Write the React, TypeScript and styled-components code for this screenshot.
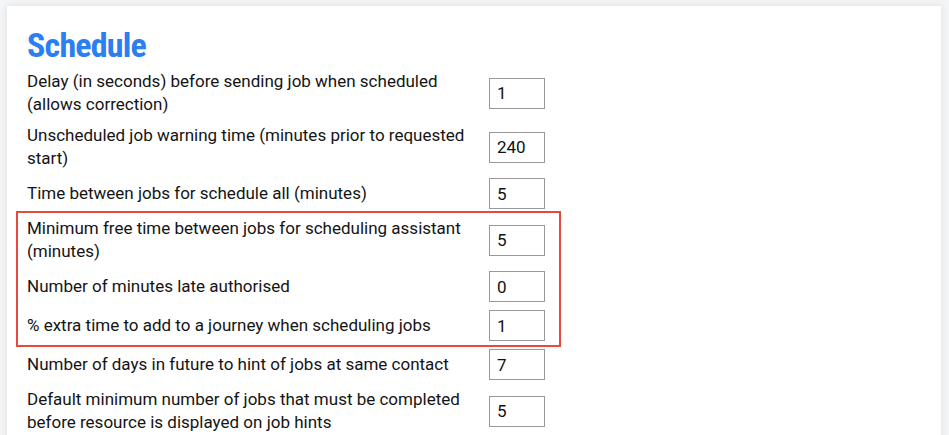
import * as React from 'react';
import styled, { createGlobalStyle } from 'styled-components';

interface Setting {
	label: string;
	value: string;
}

const before: Setting[] = [
	{ label: 'Delay (in seconds) before sending job when scheduled (allows correction)', value: '1' },
	{ label: 'Unscheduled job warning time (minutes prior to requested start)', value: '240' },
	{ label: 'Time between jobs for schedule all (minutes)', value: '5' },
];

const highlighted: Setting[] = [
	{ label: 'Minimum free time between jobs for scheduling assistant (minutes)', value: '5' },
	{ label: 'Number of minutes late authorised', value: '0' },
	{ label: '% extra time to add to a journey when scheduling jobs', value: '1' },
];

const after: Setting[] = [
	{ label: 'Number of days in future to hint of jobs at same contact', value: '7' },
	{ label: 'Default minimum number of jobs that must be completed before resource is displayed on job hints', value: '5' },
];

const Row: React.FC<Setting> = ({ label, value }) => (
	<RowWrap>
		<Label>{label}</Label>
		<Field type="text" defaultValue={value} />
	</RowWrap>
);

const App: React.FC = () => {
	return (
		<>
			<GlobalStyle />
			<Page>
				<Card>
					<Title>Schedule</Title>
					{before.map((s) => <Row key={s.label} {...s} />)}
					<Highlight>
						{highlighted.map((s) => <Row key={s.label} {...s} />)}
					</Highlight>
					{after.map((s) => <Row key={s.label} {...s} />)}
				</Card>
			</Page>
		</>
	);
};

export default App;

const GlobalStyle = createGlobalStyle`
	* {
		box-sizing: border-box;
	}
	html, body {
		margin: 0;
		padding: 0;
		background: #f4f5f7;
		font-family: Roboto, "Liberation Sans", sans-serif;
		overflow: hidden;
	}
`

const Page = styled.div`
	width: 949px;
	height: 435px;
	padding: 6px 8px 0 7px;
	overflow: hidden;
`

const Card = styled.div`
	background: #fff;
	height: 460px;
	padding: 19px 20px 0 20px;
	box-shadow: 0 0 8px rgba(0, 0, 0, 0.1);
`

const Title = styled.h2`
	margin: 0 0 1px;
	font-family: "Roboto Condensed", "Liberation Sans Narrow", "DejaVu Sans Condensed", sans-serif;
	font-size: 34px;
	font-weight: 700;
	letter-spacing: -0.8px;
	line-height: 40px;
	color: #2b7ff0;
`

const Highlight = styled.div`
	margin: -2px 0 -2px -11px;
	width: 545px;
	padding: 0 0 0 9px;
	border: 2px solid #e5493f;
`

const RowWrap = styled.div`
	display: flex;
	align-items: center;
	padding: 4px 0;
`

const Label = styled.div`
	width: 462px;
	padding-right: 12px;
	font-size: 17px;
	line-height: 23px;
	color: #141414;
`

const Field = styled.input`
	width: 56px;
	height: 31px;
	padding: 0 7px;
	border: 1px solid #999;
	border-radius: 0;
	font-family: Roboto, "Liberation Sans", sans-serif;
	font-size: 17px;
	color: #111;
	background: #fff;
	outline: none;
`
